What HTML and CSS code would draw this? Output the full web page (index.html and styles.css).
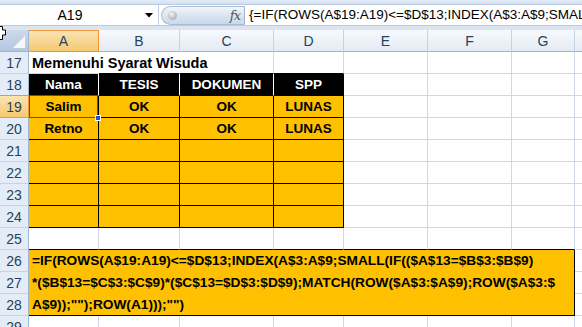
FILE: index.html
```html
<!DOCTYPE html>
<html>
<head>
<meta charset="utf-8">
<link rel="stylesheet" href="styles.css">
</head>
<body>
<div class="app">
  <div class="strip"></div>
  <div class="fbar">
    <div class="namebox">
      <span class="nb-text">A19</span>
      <svg class="nb-arrow" width="8" height="5" viewBox="0 0 8 5"><path d="M0 0H8L4 4.5Z" fill="#000"/></svg>
    </div>
    <div class="pill">
      <span class="knob"></span>
      <span class="fx">fx</span>
    </div>
    <div class="formula">{=IF(ROWS(A$19:A19)&lt;=$D$13;INDEX(A$3:A$9;SMALL(IF(($A$13=$B$3:$B$9)*($B$13=$C$3:$C$9)</div>
  </div>
  <div class="gap"></div>
  <div class="sheet">
    <div class="corner">
      <svg class="cursor" width="7" height="14" viewBox="0 0 7 14"><path d="M-2 0.5H2.5V4H5.5V9H2.5V13.5H-2Z" fill="#fff" stroke="#000" stroke-width="1"/></svg>
      <svg width="12" height="12" viewBox="0 0 12 12"><path d="M12 0V12H0Z" fill="#ffffff" opacity="0.85"/></svg>
    </div>
    <div class="ch ch-sel">A</div>
    <div class="ch">B</div>
    <div class="ch">C</div>
    <div class="ch">D</div>
    <div class="ch">E</div>
    <div class="ch">F</div>
    <div class="ch">G</div>
    <div class="ch ch-last"></div>

    <div class="rh">17</div>
    <div class="c title nb">Memenuhi Syarat Wisuda</div>
    <div class="c nb tb"></div>
    <div class="c tb"></div>
    <div class="c tb"></div>
    <div class="c"></div><div class="c"></div><div class="c"></div><div class="c"></div>

    <div class="rh">18</div>
    <div class="c th">Nama</div>
    <div class="c th">TESIS</div>
    <div class="c th">DOKUMEN</div>
    <div class="c th th-last">SPP</div>
    <div class="c"></div><div class="c"></div><div class="c"></div><div class="c"></div>

    <div class="rh rh-sel">19</div>
    <div class="c y sel-cell">Salim<span class="sel"><span class="handle"></span></span></div>
    <div class="c y">OK</div>
    <div class="c y">OK</div>
    <div class="c y">LUNAS</div>
    <div class="c"></div><div class="c"></div><div class="c"></div><div class="c"></div>

    <div class="rh">20</div>
    <div class="c y">Retno</div>
    <div class="c y">OK</div>
    <div class="c y">OK</div>
    <div class="c y">LUNAS</div>
    <div class="c"></div><div class="c"></div><div class="c"></div><div class="c"></div>

    <div class="rh">21</div>
    <div class="c y"></div><div class="c y"></div><div class="c y"></div><div class="c y"></div>
    <div class="c"></div><div class="c"></div><div class="c"></div><div class="c"></div>

    <div class="rh">22</div>
    <div class="c y"></div><div class="c y"></div><div class="c y"></div><div class="c y"></div>
    <div class="c"></div><div class="c"></div><div class="c"></div><div class="c"></div>

    <div class="rh">23</div>
    <div class="c y"></div><div class="c y"></div><div class="c y"></div><div class="c y"></div>
    <div class="c"></div><div class="c"></div><div class="c"></div><div class="c"></div>

    <div class="rh">24</div>
    <div class="c y"></div><div class="c y"></div><div class="c y"></div><div class="c y"></div>
    <div class="c"></div><div class="c"></div><div class="c"></div><div class="c"></div>

    <div class="rh">25</div>
    <div class="c tb"></div><div class="c tb"></div><div class="c tb"></div><div class="c tb"></div>
    <div class="c tb"></div><div class="c tb"></div><div class="c tb"></div><div class="c"></div>

    <div class="rh">26</div>
    <div class="c merged">
      <div class="ml">=IF(ROWS(A$19:A19)&lt;=$D$13;INDEX(A$3:A$9;SMALL(IF(($A$13=$B$3:$B$9)</div>
      <div class="ml">*($B$13=$C$3:$C$9)*($C$13=$D$3:$D$9);MATCH(ROW($A$3:$A$9);ROW($A$3:$</div>
      <div class="ml">A$9));"");ROW(A1)));"")</div>
    </div>
    <div class="c"></div>
    <div class="rh">27</div>
    <div class="c"></div>
    <div class="rh">28</div>
    <div class="c"></div>

    <div class="rh">29</div>
    <div class="c"></div><div class="c"></div><div class="c"></div><div class="c"></div>
    <div class="c"></div><div class="c"></div><div class="c"></div><div class="c"></div>
  </div>
</div>
</body>
</html>
```
FILE: styles.css
```css
* { box-sizing: border-box; }
html, body { margin: 0; padding: 0; background: #fff; }
body { font-family: "Liberation Sans", Arial, sans-serif; overflow: hidden; }
.app { width: 582px; height: 327px; overflow: hidden; }

.strip {
  height: 5px;
  background: linear-gradient(#e3ecf7, #d3e0f0);
  border-bottom: 1px solid #b8cbe3;
}
.fbar {
  height: 21px;
  display: flex;
  background: #fff;
  border-bottom: 1px solid #b9c9de;
}
.namebox {
  width: 159px;
  display: flex;
  align-items: center;
  position: relative;
  border-right: 1px solid #c3d1e4;
}
.nb-text {
  width: 140px;
  text-align: center;
  font-size: 14px;
  color: #000;
}
.nb-arrow { margin-left: 5px; }
.pill {
  width: 84px;
  margin: 1px 0 0 2px;
  height: 19px;
  border-radius: 10px 0 0 10px;
  background: linear-gradient(#f4f7fb, #d9e3f0 55%, #cbd8ea);
  border: 1px solid #a9bcd5;
  border-right: 1px solid #9fb3cf;
  display: flex;
  align-items: center;
  justify-content: space-between;
  padding: 0 4px 0 6px;
}
.knob {
  width: 9px;
  height: 9px;
  border-radius: 50%;
  background: radial-gradient(circle at 40% 35%, #f2f2f2, #9a9a9a);
}
.fx {
  font-family: "DejaVu Serif", "Liberation Serif", serif;
  font-style: italic;
  font-size: 13px;
  color: #555;
  letter-spacing: -1px;
}
.formula {
  flex: 1;
  white-space: nowrap;
  overflow: hidden;
  font-size: 13.5px;
  line-height: 20px;
  padding-left: 4px;
  color: #000;
}
.gap {
  height: 4px;
  background: #dbe5f1;
}

.sheet {
  display: grid;
  grid-template-columns: 29px 70px 81px 94px 70px 84px 84px 63px 10px;
  grid-auto-rows: 22px;
  font-size: 13.5px;
}
.corner {
  position: relative;
  background: linear-gradient(#cdd9ea, #b4c7e0);
  border-right: 1px solid #9eb6ce;
  border-bottom: 1px solid #9eb6ce;
  display: flex;
  align-items: flex-end;
  justify-content: flex-end;
  padding: 0 3px 3px 0;
}
.cursor {
  position: absolute;
  left: 0;
  top: -4px;
}
.ch {
  background: linear-gradient(#f7f9fc, #e4ebf5);
  border-right: 1px solid #c5d3e3;
  border-bottom: 1px solid #9eb6ce;
  display: flex;
  align-items: center;
  justify-content: center;
  color: #27425a;
  font-size: 14px;
}
.ch-sel {
  background: linear-gradient(#fbe3b4, #f5c96f);
  border: 1px solid #f29536;
  border-left: 0;
}
.rh {
  background: #e4ecf7;
  border-right: 1px solid #9eb6ce;
  border-bottom: 1px solid #c5d3e3;
  display: flex;
  align-items: center;
  justify-content: center;
  color: #27425a;
  font-size: 14px;
}
.rh-sel {
  background: linear-gradient(#fbe3b4, #f5c96f);
  border-right: 1px solid #f29536;
  border-bottom: 1px solid #f29536;
  border-top: 1px solid #f29536;
  margin-top: -1px;
}
.c {
  border-right: 1px solid #d0d7e5;
  border-bottom: 1px solid #d0d7e5;
  display: flex;
  align-items: center;
  justify-content: center;
  font-weight: bold;
  color: #000;
  white-space: nowrap;
}
.c.nb { border-right-color: transparent; }
.c.tb { border-bottom-color: #000; }
.title {
  justify-content: flex-start;
  padding-left: 3px;
  overflow: visible;
  position: relative;
  z-index: 1;
  font-size: 14.5px;
}
.th {
  background: #000;
  color: #fff;
  border-right: 1px solid #fff;
  border-bottom: 1px solid #000;
}
.th.th-last { border-right-color: #000; }
.y {
  background: #ffc000;
  border-right: 1px solid #000;
  border-bottom: 1px solid #000;
}
.sel-cell { position: relative; }
.sel {
  position: absolute;
  left: 0;
  top: -1px;
  right: 0;
  bottom: -1px;
  border: 1px solid #2450d8;
}
.handle {
  position: absolute;
  right: -4px;
  bottom: -4px;
  width: 6px;
  height: 6px;
  background: #2450d8;
  border: 1px solid #fff;
}
.merged {
  grid-column: span 7;
  grid-row: span 3;
  background: #ffc000;
  border-right: 1px solid #000;
  border-bottom: 1px solid #000;
  display: flex;
  flex-direction: column;
  align-items: flex-start;
  justify-content: flex-start;
  padding-left: 3px;
  font-size: 13.7px;
}
.ml {
  height: 22px;
  line-height: 22px;
  white-space: nowrap;
}
```
